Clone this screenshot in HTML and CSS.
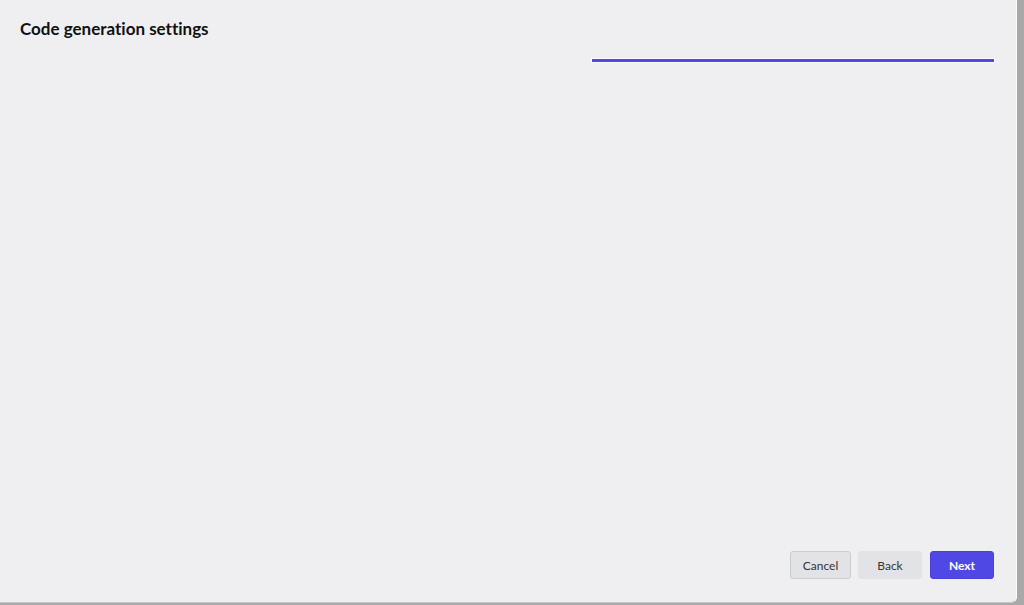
FILE: index.html
```html
<!DOCTYPE html>
<html>
<head>
<meta charset="utf-8">
<link rel="stylesheet" href="styles.css">
</head>
<body>
<div class="dialog">
  <h1 class="title">Code generation settings</h1>
  <div class="progress-row">
    <div class="progress"><div class="progress-fill"></div></div>
  </div>
  <div class="content"></div>
  <div class="footer">
    <button class="btn btn-cancel">Cancel</button>
    <button class="btn btn-back">Back</button>
    <button class="btn btn-next">Next</button>
  </div>
</div>
</body>
</html>
```

FILE: styles.css
```css
html, body {
  margin: 0;
  padding: 0;
  height: 100%;
}
body {
  background: #a9a9a9;
  font-family: Lato, "Open Sans", "Liberation Sans", sans-serif;
  font-variant-ligatures: none;
  overflow: hidden;
}
.dialog {
  box-sizing: border-box;
  width: 1017px;
  height: 603px;
  background: #efeff1;
  border-right: 1px solid #fbfbfc;
  border-bottom: 1px solid #c8c8ca;
  border-bottom-right-radius: 6px;
  padding: 20px 22px 23px 20px;
  display: flex;
  flex-direction: column;
}
.title {
  margin: 0;
  font-size: 17px;
  line-height: 18px;
  font-weight: 700;
  color: #111;
}
.progress-row {
  margin-top: 21px;
  display: flex;
  justify-content: flex-end;
}
.progress {
  width: 402px;
  height: 3px;
  background: #fff;
  outline: 1px solid #fafaff;
}
.progress-fill {
  width: 100%;
  height: 100%;
  background: #5048e5;
}
.content {
  flex: 1;
}
.footer {
  display: flex;
  justify-content: flex-end;
}
.btn {
  box-sizing: border-box;
  height: 28px;
  font-family: inherit;
  font-size: 12px;
  border-radius: 3px;
  padding: 0;
  cursor: pointer;
}
.btn-cancel {
  width: 61px;
  background: #e2e3e6;
  border: 1px solid #cbccd0;
  color: #333;
}
.btn-back {
  width: 64px;
  margin-left: 7px;
  background: #e2e3e6;
  border: 1px solid #e2e3e6;
  color: #333;
}
.btn-next {
  width: 64px;
  margin-left: 8px;
  background: #5048e5;
  border: 1px solid #4a42d8;
  color: #fff;
  font-weight: 700;
}
```
